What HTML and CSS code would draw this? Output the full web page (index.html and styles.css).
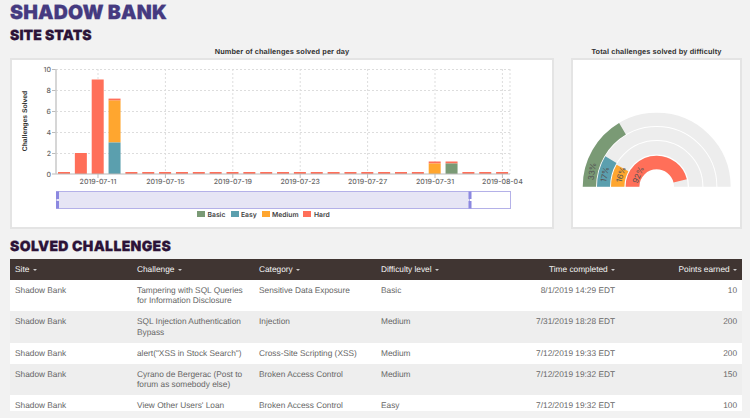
FILE: index.html
```html
<!DOCTYPE html>
<html lang="en">
<head>
<meta charset="utf-8">
<title>Shadow Bank</title>
<link rel="stylesheet" href="styles.css">
</head>
<body>
<h1 class="site-title">SHADOW BANK</h1>
<h2 class="section-title">SITE STATS</h2>
<section class="stats">
  <figure class="panel panel-wide">
    <figcaption class="panel-title">Number of challenges solved per day</figcaption>
    <div class="panel-box">
      <svg class="plot" viewBox="12 60 540 167" width="540" height="167" role="img" aria-label="Challenges solved per day">
        <g class="grid">
          <path d="M56 69.5H510M56 90.5H510M56 111.5H510M56 132.5H510M56 153.5H510"/>
          <path d="M98 69V174M165.4 69V174M232.8 69V174M300.2 69V174M367.6 69V174M435 69V174M502.4 69V174M510 69V174"/>
        </g>
        <g class="hard">
          <rect x="58" y="172" width="12" height="2"/><rect x="74.85" y="153" width="12" height="21"/><rect x="91.7" y="79.5" width="12" height="94.5"/><rect x="108.55" y="98.6" width="12" height="2"/><rect x="125.4" y="172" width="12" height="2"/><rect x="142.25" y="172" width="12" height="2"/><rect x="159.1" y="172" width="12" height="2"/><rect x="175.95" y="172" width="12" height="2"/><rect x="192.8" y="172" width="12" height="2"/><rect x="209.65" y="172" width="12" height="2"/><rect x="226.5" y="172" width="12" height="2"/><rect x="243.35" y="172" width="12" height="2"/><rect x="260.2" y="172" width="12" height="2"/><rect x="277.05" y="172" width="12" height="2"/><rect x="293.9" y="172" width="12" height="2"/><rect x="310.75" y="172" width="12" height="2"/><rect x="327.6" y="172" width="12" height="2"/><rect x="344.45" y="172" width="12" height="2"/><rect x="361.3" y="172" width="12" height="2"/><rect x="378.15" y="172" width="12" height="2"/><rect x="395" y="172" width="12" height="2"/><rect x="411.85" y="172" width="12" height="2"/><rect x="428.7" y="161.5" width="12" height="2"/><rect x="445.55" y="161.5" width="12" height="2"/><rect x="462.4" y="172" width="12" height="2"/><rect x="479.25" y="172" width="12" height="2"/><rect x="496.1" y="172" width="12" height="2"/>
        </g>
        <rect class="medium" x="108.55" y="100.5" width="12" height="42"/>
        <rect class="easy" x="108.55" y="142.5" width="12" height="31.5"/>
        <rect class="medium" x="428.7" y="163.5" width="12" height="10.5"/>
        <rect class="basic" x="445.55" y="163.5" width="12" height="10.5"/>
        <path class="axis" d="M52 69.5H56M52 90.5H56M52 111.5H56M52 132.5H56M52 153.5H56M52 174H510M98 174V178M165.4 174V178M232.8 174V178M300.2 174V178M367.6 174V178M435 174V178M502.4 174V178"/>
        <path class="axis axis-y" d="M56 69V174"/>
        <g class="tick tick-y">
          <text x="51" y="72">10</text><text x="51" y="93">8</text><text x="51" y="114">6</text><text x="51" y="135">4</text><text x="51" y="156">2</text><text x="51" y="177">0</text>
        </g>
        <g class="tick tick-x">
          <text x="98" y="184">2019-07-11</text><text x="165.4" y="184">2019-07-15</text><text x="232.8" y="184">2019-07-19</text><text x="300.2" y="184">2019-07-23</text><text x="367.6" y="184">2019-07-27</text><text x="435" y="184">2019-07-31</text><text x="502.4" y="184">2019-08-04</text>
        </g>
        <text class="axis-label" transform="translate(27 121) rotate(-90)">Challenges Solved</text>
        <rect class="slider-track" x="56.5" y="191.5" width="454" height="17"/>
        <rect class="slider-fill" x="56.5" y="191.5" width="413" height="17"/>
        <rect class="slider-handle" x="56" y="191.5" width="3" height="7.5"/>
        <rect class="slider-handle" x="56" y="201" width="3" height="7.5"/>
        <rect class="slider-handle" x="468.5" y="191.5" width="3" height="7.5"/>
        <rect class="slider-handle" x="468.5" y="201" width="3" height="7.5"/>
        <g class="legend">
          <rect class="basic" x="197" y="211" width="8" height="6"/><text x="207.5" y="216.5">Basic</text>
          <rect class="easy" x="231" y="211" width="8" height="6"/><text x="241" y="216.5">Easy</text>
          <rect class="medium" x="262" y="211" width="8" height="6"/><text x="272" y="216.5">Medium</text>
          <rect class="hard" x="303" y="211" width="8" height="6"/><text x="314" y="216.5">Hard</text>
        </g>
      </svg>
    </div>
  </figure>
  <figure class="panel panel-narrow">
    <figcaption class="panel-title">Total challenges solved by difficulty</figcaption>
    <div class="panel-box">
      <svg class="plot" viewBox="573 60 167 167" width="167" height="167" role="img" aria-label="Challenges solved by difficulty">
        <g class="ring-bg">
          <path stroke-width="13.3" d="M589.4 186.7A67.3 67.3 0 0 1 724 186.7"/>
          <path stroke-width="13" d="M603.5 186.7A53.2 53.2 0 0 1 709.9 186.7"/>
          <path stroke-width="13.4" d="M617.7 186.7A39 39 0 0 1 695.7 186.7"/>
          <path stroke-width="13.7" d="M632.5 186.7A24.2 24.2 0 0 1 680.9 186.7"/>
        </g>
        <g class="ring-value">
          <path class="ring-basic" stroke-width="13.3" pathLength="100" stroke-dasharray="33 100" d="M589.4 186.7A67.3 67.3 0 0 1 724 186.7"/>
          <path class="ring-easy" stroke-width="13" pathLength="100" stroke-dasharray="17 100" d="M603.5 186.7A53.2 53.2 0 0 1 709.9 186.7"/>
          <path class="ring-medium" stroke-width="13.4" pathLength="100" stroke-dasharray="16 100" d="M617.7 186.7A39 39 0 0 1 695.7 186.7"/>
          <path class="ring-hard" stroke-width="13.7" pathLength="100" stroke-dasharray="92 100" d="M632.5 186.7A24.2 24.2 0 0 1 680.9 186.7"/>
        </g>
        <g class="ring-label">
          <text transform="translate(593.5 180.5) rotate(-82)">33%</text>
          <text transform="translate(606 182.5) rotate(-78)">17%</text>
          <text transform="translate(621.5 183) rotate(-75)">16%</text>
          <text transform="translate(637.5 184) rotate(-68)">92%</text>
        </g>
      </svg>
    </div>
  </figure>
</section>
<h2 class="section-title section-title-table">SOLVED CHALLENGES</h2>
<div class="table-clip">
  <table class="results">
    <thead>
      <tr>
        <th>Site <span class="caret"></span></th>
        <th>Challenge <span class="caret"></span></th>
        <th>Category <span class="caret"></span></th>
        <th>Difficulty level <span class="caret"></span></th>
        <th class="num">Time completed <span class="caret"></span></th>
        <th class="num">Points earned <span class="caret"></span></th>
      </tr>
    </thead>
    <tbody>
      <tr><td>Shadow Bank</td><td>Tampering with SQL Queries for Information Disclosure</td><td>Sensitive Data Exposure</td><td>Basic</td><td class="num">8/1/2019 14:29 EDT</td><td class="num">10</td></tr>
      <tr><td>Shadow Bank</td><td>SQL Injection Authentication Bypass</td><td>Injection</td><td>Medium</td><td class="num">7/31/2019 18:28 EDT</td><td class="num">200</td></tr>
      <tr><td>Shadow Bank</td><td>alert("XSS in Stock Search")</td><td>Cross-Site Scripting (XSS)</td><td>Medium</td><td class="num">7/12/2019 19:33 EDT</td><td class="num">200</td></tr>
      <tr><td>Shadow Bank</td><td>Cyrano de Bergerac (Post to forum as somebody else)</td><td>Broken Access Control</td><td>Medium</td><td class="num">7/12/2019 19:32 EDT</td><td class="num">150</td></tr>
      <tr><td>Shadow Bank</td><td>View Other Users' Loan</td><td>Broken Access Control</td><td>Easy</td><td class="num">7/12/2019 19:32 EDT</td><td class="num">100</td></tr>
    </tbody>
  </table>
</div>
</body>
</html>
```
FILE: styles.css
```css
* { box-sizing: border-box; }
html, body { margin: 0; height: 100%; }
body {
  width: 750px;
  height: 418px;
  overflow: hidden;
  padding: 0 8px 0 10px;
  background: #f2f2f2;
  font-family: "Inter", "Liberation Sans", sans-serif;
  color: #666;
  text-rendering: geometricPrecision;
}
.site-title {
  margin: 0;
  height: 26px;
  font-size: 19.5px;
  line-height: 25px;
  font-weight: 900;
  letter-spacing: 0.2px;
  color: #453a80;
  -webkit-text-stroke: 0.3px #453a80;
}
.section-title {
  margin: 0;
  height: 20px;
  font-size: 14px;
  line-height: 19px;
  font-weight: 900;
  letter-spacing: 0.1px;
  color: #2c1338;
  -webkit-text-stroke: 0.25px #2c1338;
}
.section-title-table { height: 20.5px; margin-top: 9px; line-height: 18px; letter-spacing: 0.35px; }
.stats { display: flex; gap: 17px; height: 183px; }
.panel { margin: 0; display: flex; flex-direction: column; }
.panel-wide { width: 544px; }
.panel-narrow { width: 171px; }
.panel-title {
  height: 12px;
  font-family: "Liberation Sans", sans-serif;
  font-size: 7.4px;
  line-height: 12px;
  font-weight: 700;
  letter-spacing: 0.1px;
  text-align: center;
  color: #333;
}
.panel-box {
  height: 171px;
  background: #fff;
  border: 2px solid #e4e4e4;
}
.plot { display: block; }
.grid path { fill: none; stroke: #ddd; stroke-width: 1; stroke-dasharray: 2 2; }
.axis { fill: none; stroke: #bbb; stroke-width: 1; }
.axis-y { stroke: #ccc; stroke-width: 1.6; }
.hard { fill: #ff6f59; }
.medium { fill: #ffa62f; }
.easy { fill: #5b9fae; }
.basic { fill: #7a9a75; }
.tick { font-size: 7px; font-weight: 500; fill: #666; }
.tick-y { text-anchor: end; }
.tick-x { text-anchor: middle; }
.axis-label {
  font-family: "Liberation Sans", sans-serif;
  font-size: 6.8px;
  font-weight: 700;
  fill: #333;
  text-anchor: middle;
}
.slider-track { fill: #fff; stroke: #b4b1e8; stroke-width: 1; }
.slider-fill { fill: #e6e5f5; stroke: #b4b1e8; stroke-width: 1; }
.slider-handle { fill: #8b88e0; }
.legend { font-size: 6.8px; font-weight: 600; fill: #444; }
.ring-bg path, .ring-value path { fill: none; }
.ring-bg path { stroke: #ededed; }
.ring-basic { stroke: #7a9a75; }
.ring-easy { stroke: #5b9fae; }
.ring-medium { stroke: #ffa62f; }
.ring-hard { stroke: #ff6f59; }
.ring-label { font-size: 8px; fill: #555; }
.table-clip { height: 152.5px; overflow: hidden; }
.results {
  width: 732px;
  table-layout: fixed;
  border-collapse: collapse;
  font-family: "Liberation Sans", sans-serif;
  font-size: 8.3px;
  line-height: 10.5px;
}
.results th, .results td {
  padding: 5.25px 5px;
  text-align: left;
  vertical-align: top;
  font-weight: 400;
}
.results th { background: #403532; color: #f4f4f4; }
.results tbody tr:nth-child(odd) { background: #fff; }
.results tbody tr:nth-child(even) { background: #eee; }
.results .num { text-align: right; }
.caret {
  display: inline-block;
  width: 0;
  height: 0;
  margin-left: 1px;
  vertical-align: 1px;
  border-style: solid;
  border-width: 2.5px 2.5px 0;
  border-color: #ccc transparent transparent;
}
```
